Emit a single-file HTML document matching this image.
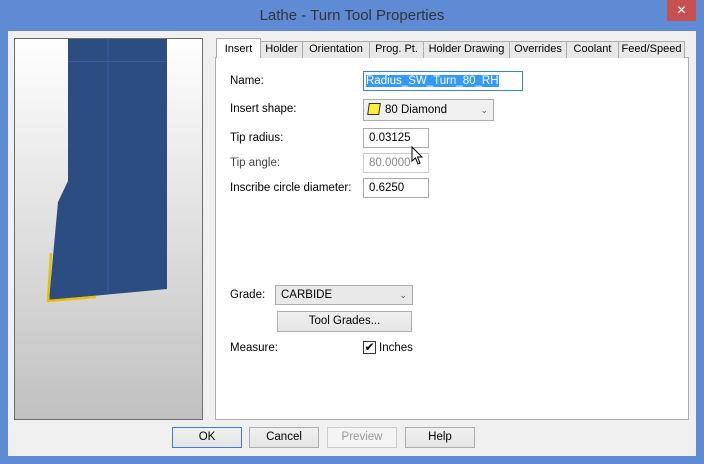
<!DOCTYPE html>
<html><head><style>
*{box-sizing:border-box;margin:0;padding:0}
body{width:704px;height:464px;background:#5f8bd5;font-family:"Liberation Sans",sans-serif;font-size:11.5px;color:#000;position:relative;overflow:hidden}
.a{position:absolute}
.title{left:0;top:0;width:704px;height:31px;text-align:center;line-height:31px;font-size:15px;color:#333}
.close{left:667px;top:0;width:29px;height:21px;background:#c75050;color:#fff;text-align:center;line-height:21px;font-size:12px}
.client{left:8px;top:31px;width:688px;height:425px;background:#f0f0f0}
.tab{top:41px;height:17px;border:1px solid #adadad;border-bottom:none;background:#e8e8e8;text-align:center;line-height:15px;font-size:11px;white-space:nowrap;overflow:hidden}
.lbl{left:230px}
.inp{background:#fff;border:1px solid #abadb3;padding-left:5px;line-height:18px}
.btn{border:1px solid #adadad;background:linear-gradient(#f0f0f0,#e5e5e5);text-align:center;line-height:19px}
</style></head><body>
<div class="a title">Lathe - Turn Tool Properties</div>
<div class="a close">✕</div>
<div class="a client"></div>
<div class="a" style="left:14px;top:38px;width:189px;height:382px;border:1px solid #6d6d6d;background:linear-gradient(#fff,#c0c0c0)"></div>
<svg class="a" style="left:0;top:0" width="704" height="464">
<polygon points="68,39 167,39 167,289 49,300 58,202 68,181" fill="#2b4d82"/>
<line x1="108" y1="39" x2="108" y2="292" stroke="#3a5fa0" stroke-width="1"/>
<line x1="68" y1="61.5" x2="167" y2="61.5" stroke="#3a5fa0" stroke-width="1"/>
<polyline points="51,253 48,301 96,297" fill="none" stroke="#e8c000" stroke-width="2.5"/>
</svg>
<div class="a" style="left:215px;top:57px;width:474px;height:363px;background:#fff;border:1px solid #adadad"></div>
<div class="a tab" style="left:216px;top:38px;height:20px;width:45px;background:#fff;z-index:2;line-height:20px">Insert</div>
<div class="a tab" style="left:260px;width:43px">Holder</div>
<div class="a tab" style="left:302px;width:68px">Orientation</div>
<div class="a tab" style="left:369px;width:55px">Prog. Pt.</div>
<div class="a tab" style="left:423px;width:87px">Holder Drawing</div>
<div class="a tab" style="left:509px;width:58px">Overrides</div>
<div class="a tab" style="left:566px;width:53px">Coolant</div>
<div class="a tab" style="left:618px;width:67px">Feed/Speed</div>
<div class="a lbl" style="top:75px">Name:</div>
<div class="a inp" style="left:363px;top:71px;width:160px;height:20px;border-color:#3c7fd8;padding-left:2px"><span style="background:#3399ff;color:#fff">Radius_SW_Turn_80_RH</span></div>
<div class="a lbl" style="top:103px">Insert shape:</div>
<div class="a inp" style="left:363px;top:99px;width:131px;height:22px;background:#f0f0f0;border-color:#acacac;line-height:20px;padding-left:4px"><span style="display:inline-block;width:12px;height:12px;background:#ffef3c;border:1px solid #333;transform:skewX(-8deg);vertical-align:-2px;margin-right:5px"></span>80 Diamond<span style="position:absolute;right:5px;color:#555;font-size:9px">&#8964;</span></div>
<div class="a lbl" style="top:132px">Tip radius:</div>
<div class="a inp" style="left:363px;top:128px;width:66px;height:20px">0.03125</div>
<div class="a lbl" style="top:157px;color:#444">Tip angle:</div>
<div class="a inp" style="left:363px;top:153px;width:66px;height:20px;color:#888;border-color:#ccc">80.0000</div>
<div class="a lbl" style="top:182px">Inscribe circle diameter:</div>
<div class="a inp" style="left:363px;top:178px;width:66px;height:20px">0.6250</div>
<svg class="a" style="left:411px;top:146px" width="14" height="20"><path d="M1,1 L1,15 L4.5,12 L7,18 L9,17 L6.5,11 L11,11 Z" fill="#fff" stroke="#000"/></svg>
<div class="a lbl" style="top:289px">Grade:</div>
<div class="a inp" style="left:275px;top:285px;width:138px;height:20px;background:#e9e9e9;border-color:#acacac;line-height:18px">CARBIDE<span style="position:absolute;right:5px;color:#555;font-size:9px">&#8964;</span></div>
<div class="a btn" style="left:277px;top:311px;width:135px;height:21px">Tool Grades...</div>
<div class="a lbl" style="top:342px">Measure:</div>
<div class="a" style="left:363px;top:341px;width:13px;height:13px;border:1px solid #333;background:#fff;font-size:12px;line-height:11px;text-align:center">✔</div>
<div class="a" style="left:379px;top:342px">Inches</div>
<div class="a btn" style="left:172px;top:427px;width:70px;height:21px;border-color:#3c7fd8">OK</div>
<div class="a btn" style="left:249px;top:427px;width:70px;height:21px">Cancel</div>
<div class="a btn" style="left:327px;top:427px;width:70px;height:21px;color:#999;border-color:#ccc;background:#f4f4f4">Preview</div>
<div class="a btn" style="left:405px;top:427px;width:70px;height:21px">Help</div>
</body></html>
